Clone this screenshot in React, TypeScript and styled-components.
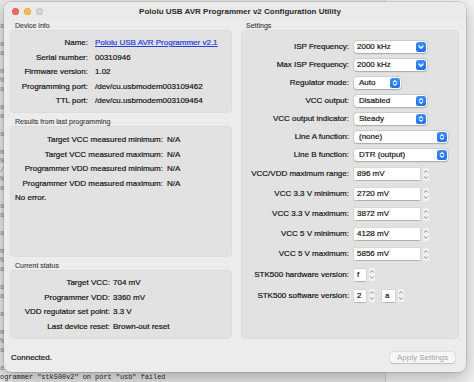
import React from 'react';
import styled, { createGlobalStyle } from 'styled-components';

const GlobalStyle = createGlobalStyle`
  html, body {
    margin: 0;
    padding: 0;
  }
  body {
    width: 474px;
    height: 382px;
    overflow: hidden;
    background: #f1f1f1;
    font-family: "Liberation Sans", Arial, sans-serif;
  }
`;

const Desktop = styled.div`
  position: relative;
  width: 474px;
  height: 382px;
  overflow: hidden;
  background: #f2f2f2;
`;

const Terminal = styled.div`
  position: absolute;
  left: 0;
  top: 0;
  width: 385px;
  height: 382px;
  display: flex;
  flex-direction: column;
  justify-content: flex-end;
  background: #e7e7e7;
  border-right: 1px solid #d2d2d2;
  font-family: "Liberation Mono", "DejaVu Sans Mono", monospace;
  font-size: 6.9px;
  line-height: 9px;
  color: #2b2b2b;
`;

const TermLine = styled.div<{ $faint?: boolean }>`
  white-space: pre;
  color: ${(p) => (p.$faint ? '#8a8a8a' : '#2b2b2b')};
`;

const Window = styled.div`
  position: absolute;
  left: 4px;
  top: 2px;
  width: 462px;
  height: 370px;
  display: flex;
  flex-direction: column;
  background: #ececec;
  border-radius: 7px;
  box-shadow: 0 0 0 0.5px rgba(0, 0, 0, 0.22), 0 6px 18px rgba(0, 0, 0, 0.28);
  overflow: hidden;
  color: #151515;
  -webkit-text-stroke: 0.2px currentColor;
`;

const TitleBar = styled.div`
  height: 19px;
  flex: none;
  display: grid;
  grid-template-columns: 1fr auto 1fr;
  align-items: center;
  padding: 0 4px;
  background: #eaeaea;
`;

const Lights = styled.div`
  display: flex;
  gap: 5px;
  padding-left: 4px;
`;

const Light = styled.span<{ $color: string }>`
  width: 7px;
  height: 7px;
  border-radius: 50%;
  background: ${(p) => p.$color};
  box-shadow: inset 0 0 0 0.5px rgba(0, 0, 0, 0.12);
`;

const WindowTitle = styled.div`
  font-size: 8px;
  font-weight: 700;
  color: #2a2a2a;
  padding-left: 10px;
  white-space: nowrap;
  -webkit-text-stroke: 0;
`;

const Body = styled.div`
  flex: 1;
  display: grid;
  grid-template-columns: 222px 218px;
  column-gap: 9px;
  padding: 0 7px 0 6px;
`;

const Column = styled.div`
  display: flex;
  flex-direction: column;
`;

const GroupTitle = styled.div<{ $top?: number }>`
  height: 9px;
  line-height: 9px;
  margin-top: ${(p) => p.$top || 0}px;
  padding-left: 5px;
  font-size: 7px;
  color: #3a3a3a;
  -webkit-text-stroke: 0.1px currentColor;
`;

const GroupBox = styled.div<{ $height?: number; $top: number }>`
  ${(p) => (p.$height ? `height: ${p.$height}px;` : 'flex: 1;')}
  box-sizing: border-box;
  padding-top: ${(p) => p.$top}px;
  background: #e2e2e2;
  border-radius: 5px;
  box-shadow: inset 0 0 0 0.5px rgba(0, 0, 0, 0.06);
`;

const InfoGrid = styled.div<{ $label: number; $gap: number }>`
  display: grid;
  grid-template-columns: ${(p) => p.$label}px 1fr;
  column-gap: ${(p) => p.$gap}px;
  grid-auto-rows: 14.5px;
  align-items: center;
  padding-left: 5px;
  font-size: 8px;
  line-height: 10px;
`;

const Label = styled.div`
  text-align: right;
  white-space: nowrap;
`;

const Value = styled.div`
  white-space: nowrap;
`;

const Link = styled.span`
  color: #2341d8;
  text-decoration: underline;
`;

const Note = styled.div`
  grid-column: 1 / -1;
`;

const SettingsGrid = styled.div`
  display: grid;
  grid-template-columns: 104px auto;
  grid-template-rows: repeat(7, 12px) repeat(5, 14px) repeat(2, 15px);
  column-gap: 5px;
  row-gap: 6px;
  align-items: center;
  padding-left: 4px;
  font-size: 8px;
  line-height: 10px;
`;

const Popup = styled.div<{ $w: number; $combo?: boolean }>`
  width: ${(p) => p.$w}px;
  height: 12px;
  box-sizing: border-box;
  display: flex;
  align-items: center;
  justify-content: space-between;
  padding: 0 1px 0 ${(p) => (p.$combo ? 3 : 5)}px;
  background: #fff;
  border-radius: 3px;
  box-shadow: 0 0 0 0.5px rgba(0, 0, 0, 0.12), 0 0.5px 1.5px rgba(0, 0, 0, 0.22);
  white-space: nowrap;
`;

const ArrowBtn = styled.span`
  width: 10px;
  height: 10px;
  border-radius: 2.5px;
  background: linear-gradient(#3f8ef8, #1c6ff0);
  display: flex;
  align-items: center;
  justify-content: center;
`;

const NumberRow = styled.div`
  display: flex;
  align-items: center;
`;

const Field = styled.div<{ $w: number }>`
  width: ${(p) => p.$w}px;
  height: 12px;
  box-sizing: border-box;
  padding-left: 3px;
  display: flex;
  align-items: center;
  background: #fff;
  box-shadow: 0 0 0 0.5px rgba(0, 0, 0, 0.08), 0 0.5px 1px rgba(0, 0, 0, 0.18);
  white-space: nowrap;
`;

const StepperBox = styled.span<{ $after?: number }>`
  width: 6px;
  height: 13px;
  margin-left: 3px;
  margin-right: ${(p) => p.$after || 0}px;
  display: flex;
  border-radius: 2px;
  background: #f2f2f2;
`;

const Footer = styled.div`
  height: 33px;
  flex: none;
  display: flex;
  align-items: center;
  justify-content: space-between;
  box-sizing: border-box;
  padding: 3px 11px 0 7px;
`;

const Status = styled.div`
  font-size: 8px;
`;

const ApplyButton = styled.div`
  width: 65px;
  height: 11px;
  display: flex;
  align-items: center;
  justify-content: center;
  background: #f6f6f6;
  border-radius: 3px;
  box-shadow: 0 0 0 0.5px rgba(0, 0, 0, 0.1), 0 0.5px 1px rgba(0, 0, 0, 0.15);
  font-size: 8px;
  color: #a6a6a6;
  -webkit-text-stroke: 0;
`;

function Chevrons({ single }: { single?: boolean }) {
  return (
    <svg width="10" height="10" viewBox="0 0 10 10">
      {single ? (
        <path d="M3 4 L5 6.2 L7 4" fill="none" stroke="#fff" strokeWidth="1.3" strokeLinecap="round" strokeLinejoin="round" />
      ) : (
        <>
          <path d="M3.3 4.2 L5 2.6 L6.7 4.2" fill="none" stroke="#fff" strokeWidth="1.1" strokeLinecap="round" strokeLinejoin="round" />
          <path d="M3.3 5.8 L5 7.4 L6.7 5.8" fill="none" stroke="#fff" strokeWidth="1.1" strokeLinecap="round" strokeLinejoin="round" />
        </>
      )}
    </svg>
  );
}

function Stepper({ after }: { after?: number }) {
  return (
    <StepperBox $after={after}>
      <svg width="6" height="13" viewBox="0 0 6 13">
        <path d="M1.4 4.2 L3 2.6 L4.6 4.2" fill="none" stroke="#7f7f7f" strokeWidth="0.9" strokeLinecap="round" strokeLinejoin="round" />
        <path d="M1.4 8.8 L3 10.4 L4.6 8.8" fill="none" stroke="#7f7f7f" strokeWidth="0.9" strokeLinecap="round" strokeLinejoin="round" />
      </svg>
    </StepperBox>
  );
}

const deviceInfo = [
  ['Serial number:', '00310946'],
  ['Firmware version:', '1.02'],
  ['Programming port:', '/dev/cu.usbmodem003109462'],
  ['TTL port:', '/dev/cu.usbmodem003109464'],
];

const results = [
  ['Target VCC measured minimum:', 'N/A'],
  ['Target VCC measured maximum:', 'N/A'],
  ['Programmer VDD measured minimum:', 'N/A'],
  ['Programmer VDD measured maximum:', 'N/A'],
];

const status = [
  ['Target VCC:', '704 mV'],
  ['Programmer VDD:', '3360 mV'],
  ['VDD regulator set point:', '3.3 V'],
  ['Last device reset:', 'Brown-out reset'],
];

const popups: [string, string, number, boolean?][] = [
  ['ISP Frequency:', '2000 kHz', 73, true],
  ['Max ISP Frequency:', '2000 kHz', 73, true],
  ['Regulator mode:', 'Auto', 47],
  ['VCC output:', 'Disabled', 73],
  ['VCC output indicator:', 'Steady', 73],
  ['Line A function:', '(none)', 94],
  ['Line B function:', 'DTR (output)', 94],
];

const numbers = [
  ['VCC/VDD maximum range:', '896 mV'],
  ['VCC 3.3 V minimum:', '2720 mV'],
  ['VCC 3.3 V maximum:', '3872 mV'],
  ['VCC 5 V minimum:', '4128 mV'],
  ['VCC 5 V maximum:', '5856 mV'],
];

// only the first column of the terminal shows beside the window
const hiddenLines = ['', 'a', '', 'a', 'a', '', 'm', '%', 'a', '', 'a', 'a', '', 'a', '', 'm', '%', '/', '%', 'a', '', 'a', 'a', '', 'a', '', 'm', '%', 'a', '', 'a', 'a', '', 'a', '', 'm', '%', 'a', '', 'a'];

export default function App() {
  return (
    <>
      <GlobalStyle />
      <Desktop>
        <Terminal>
          {hiddenLines.map((line, i) => (
            <TermLine key={i} $faint>{line || ' '}</TermLine>
          ))}
          <TermLine>ogrammer "stk500v2" on port "usb" failed</TermLine>
        </Terminal>
        <Window>
          <TitleBar>
            <Lights>
              <Light $color="#ee6a5f" />
              <Light $color="#f5bd4f" />
              <Light $color="#d3d3d3" />
            </Lights>
            <WindowTitle>Pololu USB AVR Programmer v2 Configuration Utility</WindowTitle>
            <span />
          </TitleBar>
          <Body>
            <Column>
              <GroupTitle>Device info</GroupTitle>
              <GroupBox $height={83} $top={5.75}>
                <InfoGrid $label={73} $gap={7}>
                  <Label>Name:</Label>
                  <Value>
                    <Link>Pololu USB AVR Programmer v2.1</Link>
                  </Value>
                  {deviceInfo.map(([k, v]) => (
                    <React.Fragment key={k}>
                      <Label>{k}</Label>
                      <Value>{v}</Value>
                    </React.Fragment>
                  ))}
                </InfoGrid>
              </GroupBox>
              <GroupTitle $top={4}>Results from last programming</GroupTitle>
              <GroupBox $top={6.75}>
                <InfoGrid $label={148} $gap={4}>
                  {results.map(([k, v]) => (
                    <React.Fragment key={k}>
                      <Label>{k}</Label>
                      <Value>{v}</Value>
                    </React.Fragment>
                  ))}
                  <Note>No error.</Note>
                </InfoGrid>
              </GroupBox>
              <GroupTitle $top={4}>Current status</GroupTitle>
              <GroupBox $height={69} $top={5.75}>
                <InfoGrid $label={95} $gap={3}>
                  {status.map(([k, v]) => (
                    <React.Fragment key={k}>
                      <Label>{k}</Label>
                      <Value>{v}</Value>
                    </React.Fragment>
                  ))}
                </InfoGrid>
              </GroupBox>
            </Column>
            <Column>
              <GroupTitle>Settings</GroupTitle>
              <GroupBox $top={11}>
                <SettingsGrid>
                  {popups.map(([k, v, w, combo]) => (
                    <React.Fragment key={k}>
                      <Label>{k}</Label>
                      <Popup $w={w} $combo={combo}>
                        <span>{v}</span>
                        <ArrowBtn>
                          <Chevrons single={combo} />
                        </ArrowBtn>
                      </Popup>
                    </React.Fragment>
                  ))}
                  {numbers.map(([k, v]) => (
                    <React.Fragment key={k}>
                      <Label>{k}</Label>
                      <NumberRow>
                        <Field $w={66}>{v}</Field>
                        <Stepper />
                      </NumberRow>
                    </React.Fragment>
                  ))}
                  <Label>STK500 hardware version:</Label>
                  <NumberRow>
                    <Field $w={12}>f</Field>
                    <Stepper />
                  </NumberRow>
                  <Label>STK500 software version:</Label>
                  <NumberRow>
                    <Field $w={12}>2</Field>
                    <Stepper after={7} />
                    <Field $w={13}>a</Field>
                    <Stepper />
                  </NumberRow>
                </SettingsGrid>
              </GroupBox>
            </Column>
          </Body>
          <Footer>
            <Status>Connected.</Status>
            <ApplyButton>Apply Settings</ApplyButton>
          </Footer>
        </Window>
      </Desktop>
    </>
  );
}
